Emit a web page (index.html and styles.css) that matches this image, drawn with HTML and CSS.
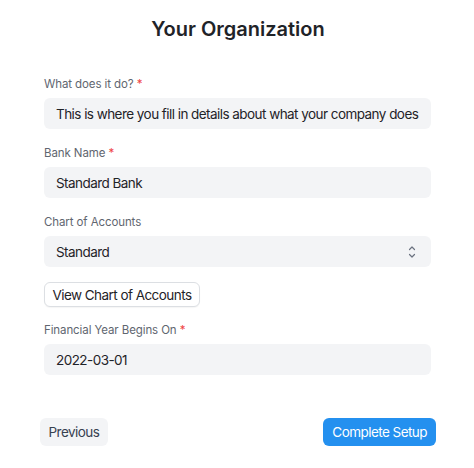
FILE: index.html
```html
<!DOCTYPE html>
<html>
<head>
<meta charset="utf-8">
<link rel="stylesheet" href="styles.css">
</head>
<body>
<div class="page">
  <h1 class="title">Your Organization</h1>
  <div class="form">
    <div class="field">
      <div class="label">What does it do? <span class="req">*</span></div>
      <div class="input">This is where you fill in details about what your company does</div>
    </div>
    <div class="field">
      <div class="label">Bank Name <span class="req">*</span></div>
      <div class="input">Standard Bank</div>
    </div>
    <div class="field">
      <div class="label">Chart of Accounts</div>
      <div class="input select">
        <span>Standard</span>
        <svg class="chev" width="10" height="14" viewBox="0 0 10 14" fill="none" stroke="#6b7280" stroke-width="1.2" stroke-linecap="round" stroke-linejoin="round">
          <path d="M2.5 4.5 L5 2 L7.5 4.5"/>
          <path d="M2.5 9.5 L5 12 L7.5 9.5"/>
        </svg>
      </div>
    </div>
    <div class="field btn-field">
      <button class="btn-outline">View Chart of Accounts</button>
    </div>
    <div class="field">
      <div class="label">Financial Year Begins On <span class="req">*</span></div>
      <div class="input">2022-03-01</div>
    </div>
  </div>
  <div class="footer">
    <button class="btn-gray">Previous</button>
    <button class="btn-primary">Complete Setup</button>
  </div>
</div>
</body>
</html>
```
FILE: styles.css
```css
* { box-sizing: border-box; }
html, body { margin: 0; padding: 0; background: #fff; }
body { font-family: Inter, "Noto Sans", sans-serif; color: #1f2937; }
.page { width: 474px; padding: 16px 38px 0 40px; }
.title {
  margin: 0;
  text-align: center;
  font-size: 20px;
  line-height: 26px;
  font-weight: 600;
  color: #1f2328;
}
.form { margin-top: 34px; padding: 0 5px 0 4px; display: flex; flex-direction: column; gap: 16px; }
.field { display: flex; flex-direction: column; gap: 6px; align-items: stretch; }
.btn-field { margin-top: -1px; margin-bottom: -1px; }
.label { font-size: 11.5px; line-height: 16px; color: #5f6670; letter-spacing: -0.1px; }
.req { color: #ef4444; }
.input {
  height: 31px;
  background: #f3f4f6;
  border-radius: 6px;
  padding: 0 12px;
  display: flex;
  align-items: center;
  font-size: 13.5px;
  letter-spacing: -0.55px;
  color: #1f2328;
  white-space: nowrap;
}
.select { justify-content: space-between; padding-right: 14px; }
.chev { display: block; }
.btn-outline {
  align-self: flex-start;
  height: 25px;
  padding: 0 7.5px;
  font-family: inherit;
  font-size: 13.5px;
  letter-spacing: -0.55px;
  color: #1f2328;
  background: #fff;
  border: 1px solid #dcdfe3;
  border-radius: 6px;
  box-shadow: 0 1px 1px rgba(0,0,0,0.04);
}
.footer { margin-top: 43px; display: flex; justify-content: space-between; }
.btn-gray, .btn-primary {
  height: 28px;
  font-family: inherit;
  font-size: 13.5px;
  letter-spacing: -0.55px;
  border: none;
  border-radius: 6px;
}
.btn-gray { background: #f3f4f6; color: #374151; padding: 0 8.5px; }
.btn-primary { background: #2490ef; color: #fff; padding: 0 9px; }
```
